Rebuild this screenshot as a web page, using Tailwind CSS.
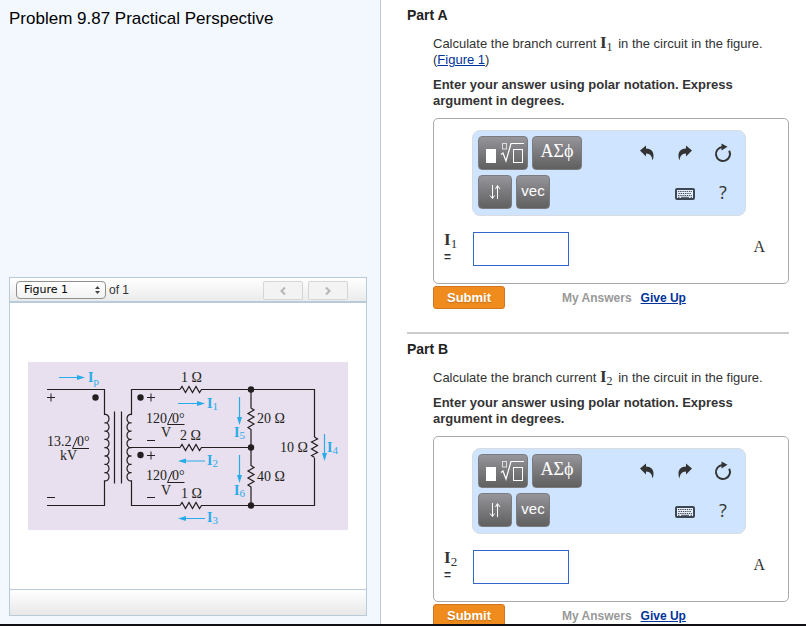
<!DOCTYPE html>
<html lang="en">
<head>
    <meta charset="UTF-8">
    <meta name="viewport" content="width=device-width, initial-scale=1.0">
    <title>Problem 9.87 Practical Perspective</title>
    <script src="https://cdn.jsdelivr.net/npm/@tailwindcss/browser@4"></script>
</head>
<body class="flex h-screen flex-col overflow-hidden bg-white font-['Liberation_Sans',Arial,sans-serif] text-[13px] leading-4 text-[#333]">
    <!-- shared icons -->
    <svg class="hidden">
        <symbol id="icon-root" viewBox="0 0 38 24">
            <rect x="0" y="8" width="10" height="14" fill="#fff"/>
            <rect x="16.500" y="2.500" width="4" height="5.500" fill="none" stroke="#ddd"/>
            <path d="M15 13.500l2-1.500 3 8 5-17.500h13" fill="none" stroke="#fff" stroke-width="1.2"/>
            <rect x="27.500" y="8.500" width="9" height="13" fill="none" stroke="#fff"/>
        </symbol>
        <symbol id="icon-sort" viewBox="0 0 14 16">
            <path d="M4.500 1v13.500M2 11.500l2.500 3 2-3M9.500 15V2M7.500 5l2-3.500 2.500 3.500" fill="none" stroke="#fff"/>
        </symbol>
        <symbol id="icon-undo" viewBox="0 0 14 16">
            <path d="M0 5.500L6 0.500V3.500c5 0 7.500 3 7.500 7 0 2-.3 3.500-1 5C12 11.500 10.500 8.500 6 8.500v3z" fill="#333"/>
        </symbol>
        <symbol id="icon-redo" viewBox="0 0 14 16">
            <path d="M14 5.500L8 0.500V3.500C3 3.500 .5 6.500 .5 10.500c0 2 .3 3.500 1 5C2 11.500 3.500 8.500 8 8.500v3z" fill="#333"/>
        </symbol>
        <symbol id="icon-reset" viewBox="0 0 18 20">
            <path d="M15.200 7.800A7 7 0 1 1 8.500 4" fill="none" stroke="#333" stroke-width="2"/>
            <path d="M7.500 0.500l6 3.200-6 3.800z" fill="#333"/>
        </symbol>
        <symbol id="icon-keyboard" viewBox="0 0 20 12">
            <rect x="1" y="1" width="18" height="10" rx="1" fill="#e6eefa" stroke="#3c4654" stroke-width="2"/>
            <path d="M3 3.500h14M3.500 5.500h13M3 7.500h14" stroke="#3c4654" stroke-width="1" stroke-dasharray="1.300 .9"/>
            <path d="M3 9.300h1.500M6 9.300h8M15.500 9.300h1.500" stroke="#3c4654"/>
        </symbol>
    </svg>

    <div class="flex min-h-0 flex-1">
        <aside class="flex w-[381px] shrink-0 flex-col border-r border-[#b8cbdb] bg-[#f3f8ff] px-[9px] pr-[13px] pb-2">
            <h1 class="pt-[9px] text-[17px] leading-5 text-black">Problem 9.87 Practical Perspective</h1>

            <section class="mt-auto border border-[#b9cadb] bg-white">
                <div class="flex items-start border-b-2 border-[#b9cadb] bg-linear-to-b from-white to-[#ebebeb] pt-[3px] pr-[18px] pb-px pl-1.5">
                    <div class="relative">
                        <select id="figure" class="block h-[18px] w-[90px] appearance-none rounded-[4px] border border-[#8f8f8f] bg-linear-to-b from-white to-[#f2f2f2] px-[7px] font-['DejaVu_Sans',sans-serif] text-[11px] leading-4 text-black">
                            <option>Figure 1</option>
                        </select>
                        <svg class="pointer-events-none absolute top-[5px] right-[6px] h-2 w-[5px]" viewBox="0 0 5 8">
                            <path d="M0 3L2.500 0 5 3zM0 5h5L2.500 8z" fill="#444"/>
                        </svg>
                    </div>
                    <label for="figure" class="ml-[3px] flex-1 text-xs leading-[18px]">of 1</label>
                    <div class="flex gap-[5px]">
                        <button aria-label="Previous figure" class="flex h-[19px] w-10 items-center justify-center rounded-xs border border-[#d6d6d6] bg-[#f3f3f3]">
                            <svg class="h-2 w-1.5" viewBox="0 0 6 8"><path d="M5 0.500L1.500 4 5 7.500" fill="none" stroke="#b5b5b5" stroke-width="2"/></svg>
                        </button>
                        <button aria-label="Next figure" class="flex h-[19px] w-10 items-center justify-center rounded-xs border border-[#d6d6d6] bg-[#f3f3f3]">
                            <svg class="h-2 w-1.5" viewBox="0 0 6 8"><path d="M1 0.500L4.500 4 1 7.500" fill="none" stroke="#b5b5b5" stroke-width="2"/></svg>
                        </button>
                    </div>
                </div>

                <div class="py-[59px] pl-[18px]">
                    <svg class="block h-[168px] w-[320px] bg-[#e8e0ee] font-['Liberation_Serif',serif] text-sm" viewBox="0 0 320 168">
                        <!-- wires -->
                        <g fill="none" stroke="#231f20" stroke-width="1.2">
                            <path d="M19 27.500H76.500V52.500c6-1 6 9.300 0 8.300c6-1 6 9.300 0 8.300c6-1 6 9.300 0 8.300c6-1 6 9.300 0 8.300c6-1 6 9.300 0 8.300c6-1 6 9.300 0 8.300c6-1 6 9.300 0 8.300c6-1 6 9.300 0 8.300V143.500H19"/>
                            <path d="M86.500 49.500V121.500M93.500 49.500V121.500"/>
                            <path d="M152 27.500H103.500V52.500c-6-1-6 9.300 0 8.300c-6-1-6 9.300 0 8.300c-6-1-6 9.300 0 8.300c-6-1-6 9.300 0 8.300c-6-1-6 9.300 0 8.300c-6-1-6 9.300 0 8.300c-6-1-6 9.300 0 8.300c-6-1-6 9.300 0 8.300V143.500H152M103.500 85.500H152"/>
                            <path d="M152 27.500l2 -3 3.500 6 3.500-6 3.500 6 3.500-6 3.500 6 2-3H286.500V75"/>
                            <path d="M152 85.500l2 -3 3.500 6 3.500-6 3.500 6 3.500-6 3.500 6 2-3H223"/>
                            <path d="M152 143.500l2 -3 3.500 6 3.500-6 3.500 6 3.500-6 3.500 6 2-3H286.500V96"/>
                            <path d="M223 27.500V46l3 2-6 3.500 6 3.500-6 3.500 6 3.500-6 3.500 3 2V103.500l3 2-6 3.500 6 3.500-6 3.500 6 3.500-6 3.500 3 2V143.500"/>
                            <path d="M286.500 75l3 2-6 3 6 3.500-6 3.500 6 3.500-6 3 3 2"/>
                        </g>
                        <g fill="#231f20">
                            <circle cx="67.500" cy="35.500" r="3.200"/>
                            <circle cx="112.500" cy="35.500" r="3.200"/>
                            <circle cx="112.500" cy="93" r="3.200"/>
                            <circle cx="223" cy="27.500" r="3.200"/>
                            <circle cx="223" cy="85.500" r="3.200"/>
                            <circle cx="223" cy="143.500" r="3.200"/>
                        </g>
                        <!-- polarity marks and phase underlines -->
                        <path d="M19 35.500h8M23 31.500v8M19 135.500h8M119 35.500h8M123 31.500v8M119 93.500h8M123 89.500v8M119 78.500h8M119 135.500h8M61 86.500H44.500L49.500 75M156.500 62.500H139.500L144.500 51M156.500 120.500H139.500L144.500 109" fill="none" stroke="#231f20" stroke-width="1"/>
                        <g fill="#231f20">
                            <text x="19" y="84">13.2</text><text x="49" y="84">0°</text>
                            <text x="32" y="98">kV</text>
                            <text x="118" y="61">120</text><text x="144" y="61">0°</text><text x="133" y="75">V</text>
                            <text x="118" y="118">120</text><text x="144" y="118">0°</text><text x="133" y="133">V</text>
                            <text x="153" y="20">1 Ω</text>
                            <text x="152" y="78">2 Ω</text>
                            <text x="153" y="136">1 Ω</text>
                            <text x="229" y="61">20 Ω</text>
                            <text x="229" y="119">40 Ω</text>
                            <text x="252" y="90">10 Ω</text>
                        </g>
                        <!-- current arrows -->
                        <g stroke="#29abe9" stroke-width="1.2">
                            <path d="M31 15.500H50M150 41.500H170M157 99H177M157 156.500H177M211.500 35V56M211.500 93V114M296.500 72V92"/>
                        </g>
                        <path d="M57 15.500l-8-2.500v5zM177 41.500l-8-2.500v5zM150 99l8-2.500v5zM150 156.500l8-2.500v5zM211.500 63l-2.500-8h5zM211.500 121l-2.500-8h5zM296.500 99l-2.500-8h5z" fill="#29abe9"/>
                        <g fill="#29abe9" font-weight="bold">
                            <text x="60" y="20">I<tspan dy="3" font-size="11" font-weight="normal">p</tspan></text>
                            <text x="179" y="46">I<tspan dy="2" font-size="11" font-weight="normal">1</tspan></text>
                            <text x="179" y="103">I<tspan dy="2" font-size="11" font-weight="normal">2</tspan></text>
                            <text x="179" y="160">I<tspan dy="2" font-size="11" font-weight="normal">3</tspan></text>
                            <text x="206" y="75">I<tspan dy="2" font-size="11" font-weight="normal">5</tspan></text>
                            <text x="206" y="133">I<tspan dy="2" font-size="11" font-weight="normal">6</tspan></text>
                            <text x="299" y="90">I<tspan dy="2" font-size="11" font-weight="normal">4</tspan></text>
                        </g>
                    </svg>
                </div>

                <div class="h-[26px] border-t border-[#b9cadb] bg-linear-to-b from-white to-[#e8e8e8]"></div>
            </section>
        </aside>

        <main class="min-w-0 flex-1 overflow-hidden pr-[17px] pl-[26px]">
            <section class="pt-[7px] pb-[23px]">
                <h2 class="text-sm leading-4 font-bold text-[#222]">Part A</h2>
                <div class="pt-[11px] pl-[26px]">
                    <p>Calculate the branch current <span class="font-['Liberation_Serif',serif] text-[17px] leading-none font-bold">I</span><sub class="mr-0.5 font-['Liberation_Serif',serif] text-xs leading-none">1</sub> in the circuit in the figure.<br>(<a href="#figure" class="text-[#003399] underline">Figure 1</a>)</p>
                    <p class="mt-[9px] max-w-[320px] font-bold">Enter your answer using polar notation. Express argument in degrees.</p>

                    <div class="mt-[9px] rounded-[5px] border border-[#aaa] pt-[11px] pb-[17px]">
                        <div class="mr-[42px] ml-[38px] flex justify-between rounded-lg border border-[#d8dce2] bg-[#cfe5ff] pt-[5px] pr-[3px] pb-1.5 pl-[5px]">
                            <div class="grid gap-[5px]">
                                <div class="flex gap-1">
                                    <button aria-label="Templates" class="flex h-[34px] w-[50px] items-center justify-center rounded-sm border border-[#7c7c80] bg-linear-to-b from-[#95959b] to-[#606060] pl-1"><svg class="h-6 w-[38px]"><use href="#icon-root"/></svg></button>
                                    <button class="h-[34px] w-[50px] rounded-sm border border-[#7c7c80] bg-linear-to-b from-[#95959b] to-[#606060] pb-1 font-['Liberation_Serif',serif] text-lg leading-none text-white">ΑΣϕ</button>
                                </div>
                                <div class="flex gap-1">
                                    <button aria-label="Sub and superscript" class="flex h-[34px] w-[34px] items-center justify-center rounded-sm border border-[#7c7c80] bg-linear-to-b from-[#95959b] to-[#606060]"><svg class="h-4 w-3.5"><use href="#icon-sort"/></svg></button>
                                    <button class="h-[34px] w-[34px] rounded-sm border border-[#7c7c80] bg-linear-to-b from-[#95959b] to-[#606060] pb-1 text-[15px] leading-none text-white">vec</button>
                                </div>
                            </div>
                            <div class="grid grid-cols-[38px_38px_38px] grid-rows-[34px_34px] place-items-center gap-y-[5px]">
                                <button aria-label="Undo"><svg class="h-4 w-3.5"><use href="#icon-undo"/></svg></button>
                                <button aria-label="Redo"><svg class="h-4 w-3.5"><use href="#icon-redo"/></svg></button>
                                <button aria-label="Reset"><svg class="h-5 w-[18px]"><use href="#icon-reset"/></svg></button>
                                <button aria-label="Keyboard shortcuts" class="col-start-2"><svg class="mt-1 h-3 w-5"><use href="#icon-keyboard"/></svg></button>
                                <button class="font-['Open_Sans',sans-serif] text-lg leading-5">?</button>
                            </div>
                        </div>
                        <div class="mt-4 flex pr-[23px] pl-[10px]">
                            <label for="answer-a" class="w-[29px] text-xs leading-4 font-bold"><span class="font-['Liberation_Serif',serif] text-[17px] leading-4">I<sub class="text-[13px] leading-none font-normal">1</sub></span><br>=</label>
                            <input id="answer-a" type="text" class="h-[34px] w-24 border border-[#3366cc] px-1">
                            <span class="mb-1 ml-auto self-center font-['Liberation_Serif',serif] text-base leading-4">A</span>
                        </div>
                    </div>

                    <div class="mt-0.5 flex items-center">
                        <button class="h-[23px] w-[72px] rounded-[3px] border border-[#cf7620] bg-[#f08c1e] font-bold text-white text-shadow-sm">Submit</button>
                        <span class="ml-[57px] text-xs font-bold text-[#999]">My Answers</span>
                        <a href="#" class="ml-[9px] text-xs font-bold text-[#003399] underline">Give Up</a>
                    </div>
                </div>
            </section>

            <section class="border-t-2 border-[#ccc] pt-[7px]">
                <h2 class="text-sm leading-4 font-bold text-[#222]">Part B</h2>
                <div class="pt-[11px] pl-[26px]">
                    <p>Calculate the branch current <span class="font-['Liberation_Serif',serif] text-[17px] leading-none font-bold">I</span><sub class="mr-0.5 font-['Liberation_Serif',serif] text-xs leading-none">2</sub> in the circuit in the figure.</p>
                    <p class="mt-[9px] max-w-[320px] font-bold">Enter your answer using polar notation. Express argument in degrees.</p>

                    <div class="mt-[9px] rounded-[5px] border border-[#aaa] pt-[11px] pb-[17px]">
                        <div class="mr-[42px] ml-[38px] flex justify-between rounded-lg border border-[#d8dce2] bg-[#cfe5ff] pt-[5px] pr-[3px] pb-1.5 pl-[5px]">
                            <div class="grid gap-[5px]">
                                <div class="flex gap-1">
                                    <button aria-label="Templates" class="flex h-[34px] w-[50px] items-center justify-center rounded-sm border border-[#7c7c80] bg-linear-to-b from-[#95959b] to-[#606060] pl-1"><svg class="h-6 w-[38px]"><use href="#icon-root"/></svg></button>
                                    <button class="h-[34px] w-[50px] rounded-sm border border-[#7c7c80] bg-linear-to-b from-[#95959b] to-[#606060] pb-1 font-['Liberation_Serif',serif] text-lg leading-none text-white">ΑΣϕ</button>
                                </div>
                                <div class="flex gap-1">
                                    <button aria-label="Sub and superscript" class="flex h-[34px] w-[34px] items-center justify-center rounded-sm border border-[#7c7c80] bg-linear-to-b from-[#95959b] to-[#606060]"><svg class="h-4 w-3.5"><use href="#icon-sort"/></svg></button>
                                    <button class="h-[34px] w-[34px] rounded-sm border border-[#7c7c80] bg-linear-to-b from-[#95959b] to-[#606060] pb-1 text-[15px] leading-none text-white">vec</button>
                                </div>
                            </div>
                            <div class="grid grid-cols-[38px_38px_38px] grid-rows-[34px_34px] place-items-center gap-y-[5px]">
                                <button aria-label="Undo"><svg class="h-4 w-3.5"><use href="#icon-undo"/></svg></button>
                                <button aria-label="Redo"><svg class="h-4 w-3.5"><use href="#icon-redo"/></svg></button>
                                <button aria-label="Reset"><svg class="h-5 w-[18px]"><use href="#icon-reset"/></svg></button>
                                <button aria-label="Keyboard shortcuts" class="col-start-2"><svg class="mt-1 h-3 w-5"><use href="#icon-keyboard"/></svg></button>
                                <button class="font-['Open_Sans',sans-serif] text-lg leading-5">?</button>
                            </div>
                        </div>
                        <div class="mt-4 flex pr-[23px] pl-[10px]">
                            <label for="answer-b" class="w-[29px] text-xs leading-4 font-bold"><span class="font-['Liberation_Serif',serif] text-[17px] leading-4">I<sub class="text-[13px] leading-none font-normal">2</sub></span><br>=</label>
                            <input id="answer-b" type="text" class="h-[34px] w-24 border border-[#3366cc] px-1">
                            <span class="mb-1 ml-auto self-center font-['Liberation_Serif',serif] text-base leading-4">A</span>
                        </div>
                    </div>

                    <div class="mt-0.5 flex items-center">
                        <button class="h-[23px] w-[72px] rounded-[3px] border border-[#cf7620] bg-[#f08c1e] font-bold text-white text-shadow-sm">Submit</button>
                        <span class="ml-[57px] text-xs font-bold text-[#999]">My Answers</span>
                        <a href="#" class="ml-[9px] text-xs font-bold text-[#003399] underline">Give Up</a>
                    </div>
                </div>
            </section>
        </main>
    </div>
    <div class="h-0.5 bg-[#101014]"></div>
</body>
</html>
